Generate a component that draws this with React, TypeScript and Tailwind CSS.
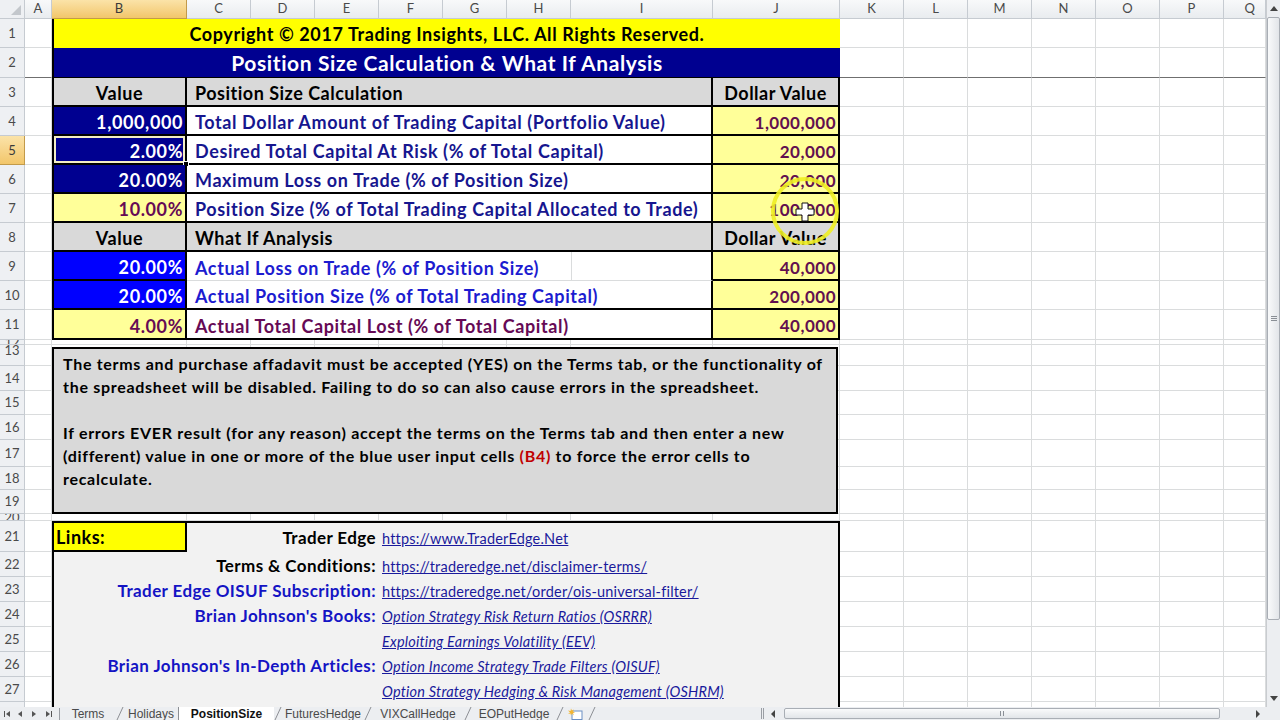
import React from 'react'

const COLS = ['A', 'B', 'C', 'D', 'E', 'F', 'G', 'H', 'I', 'J', 'K', 'L', 'M', 'N', 'O', 'P', 'Q']
const ROWS = Array.from({ length: 28 }, (_, i) => i + 1)

type CalcRow = {
  pos: string
  value: string
  valueCls: string
  label: string
  labelCls: string
  labelBorder: string
  dollar: string
  selected?: boolean
}

const calcRows: CalcRow[] = [
  {
    pos: 'row-start-5',
    value: '1,000,000',
    valueCls: 'bg-[#000090] text-white',
    label: 'Total Dollar Amount of Trading Capital (Portfolio Value)',
    labelCls: 'text-[#16168f]',
    labelBorder: 'border-b-2 border-b-black',
    dollar: '1,000,000',
  },
  {
    pos: 'row-start-6',
    value: '2.00%',
    valueCls: 'bg-[#000090] text-white',
    label: 'Desired Total Capital At Risk (% of Total Capital)',
    labelCls: 'text-[#16168f]',
    labelBorder: 'border-b-2 border-b-black',
    dollar: '20,000',
    selected: true,
  },
  {
    pos: 'row-start-7',
    value: '20.00%',
    valueCls: 'bg-[#000090] text-white',
    label: 'Maximum Loss on Trade (% of Position Size)',
    labelCls: 'text-[#16168f]',
    labelBorder: 'border-b-2 border-b-black',
    dollar: '20,000',
  },
  {
    pos: 'row-start-8',
    value: '10.00%',
    valueCls: 'bg-[#ffff99] text-[#660a55]',
    label: 'Position Size (% of Total Trading Capital Allocated to Trade)',
    labelCls: 'text-[#16168f]',
    labelBorder: 'border-b-2 border-b-black',
    dollar: '100,000',
  },
]

const whatIfRows: CalcRow[] = [
  {
    pos: 'row-start-10',
    value: '20.00%',
    valueCls: 'bg-[#0000ff] text-white',
    label: 'Actual Loss on Trade (% of Position Size)',
    labelCls: 'text-[#1c1cd0]',
    labelBorder: 'border-b border-b-[#dadcdd]',
    dollar: '40,000',
  },
  {
    pos: 'row-start-11',
    value: '20.00%',
    valueCls: 'bg-[#0000ff] text-white',
    label: 'Actual Position Size (% of Total Trading Capital)',
    labelCls: 'text-[#1c1cd0]',
    labelBorder: 'border-b-2 border-b-black',
    dollar: '200,000',
  },
  {
    pos: 'row-start-12',
    value: '4.00%',
    valueCls: 'bg-[#ffff99] text-[#660a55]',
    label: 'Actual Total Capital Lost (% of Total Capital)',
    labelCls: 'text-[#660a55]',
    labelBorder: 'border-b-2 border-b-black',
    dollar: '40,000',
  },
]

const links = [
  { pos: 'row-start-22', label: 'Trader Edge', labelCls: 'text-black', href: 'https://www.TraderEdge.Net', italic: false },
  { pos: 'row-start-23', label: 'Terms & Conditions:', labelCls: 'text-black', href: 'https://traderedge.net/disclaimer-terms/', italic: false },
  { pos: 'row-start-24', label: 'Trader Edge OISUF Subscription:', labelCls: 'text-[#1414c4]', href: 'https://traderedge.net/order/ois-universal-filter/', italic: false },
  { pos: 'row-start-25', label: "Brian Johnson's Books:", labelCls: 'text-[#1414c4]', href: 'Option Strategy Risk Return Ratios (OSRRR)', italic: true },
  { pos: 'row-start-26', label: '', labelCls: '', href: 'Exploiting Earnings Volatility (EEV)', italic: true },
  { pos: 'row-start-27', label: "Brian Johnson's In-Depth Articles:", labelCls: 'text-[#1414c4]', href: 'Option Income Strategy Trade Filters (OISUF)', italic: true },
  { pos: 'row-start-28', label: '', labelCls: '', href: 'Option Strategy Hedging & Risk Management (OSHRM)', italic: true },
]

function DataRow({ row }: { row: CalcRow }) {
  return (
    <>
      <div
        className={`relative col-start-3 col-end-4 flex items-center justify-end border-x-2 border-b-2 border-black pr-[2px] pt-[4px] text-[18px] font-bold tracking-[0.6px] ${row.pos} ${row.valueCls}`}
      >
        {row.value}
        {row.selected && (
          <>
            <div className="absolute inset-0 border-2 border-[#f3eec6]" />
            <div className="absolute -bottom-[4px] -right-[4px] h-[6px] w-[6px] border border-white bg-black" />
          </>
        )}
      </div>
      <div
        className={`col-start-4 col-end-11 flex items-center whitespace-nowrap border-r-2 border-r-black bg-white pl-[8px] pt-[4px] text-[18px] font-bold tracking-[0.6px] ${row.pos} ${row.labelCls} ${row.labelBorder}`}
      >
        {row.label}
      </div>
      <div
        className={`col-start-11 col-end-12 flex items-center justify-end border-r-2 border-b-2 border-black bg-[#ffff99] pr-[2px] pt-[4px] text-[17px] font-bold tracking-[0.5px] text-[#620f4f] ${row.pos}`}
      >
        {row.dollar}
      </div>
    </>
  )
}

function HeaderRow({ pos, title }: { pos: string; title: string }) {
  return (
    <>
      <div className={`col-start-3 col-end-4 flex items-center justify-center border-x-2 border-b-2 border-black bg-[#d9d9d9] pt-[4px] text-[18px] font-bold tracking-[0.6px] text-black ${pos}`}>
        Value
      </div>
      <div className={`col-start-4 col-end-11 flex items-center border-r-2 border-b-2 border-black bg-[#d9d9d9] pl-[8px] pt-[4px] text-[18px] font-bold tracking-[0.5px] text-black ${pos}`}>
        {title}
      </div>
      <div className={`col-start-11 col-end-12 flex items-center justify-center border-r-2 border-b-2 border-black bg-[#d9d9d9] pt-[4px] text-[18px] font-bold tracking-[0.5px] text-black ${pos}`}>
        Dollar Value
      </div>
    </>
  )
}

function Slash() {
  return (
    <svg width="8" height="13" viewBox="0 0 8 13" className="shrink-0">
      <line x1="1" y1="13" x2="7" y2="0" stroke="#8c8f94" strokeWidth="1" />
    </svg>
  )
}

function TabBar() {
  return (
    <div className="flex h-[13px] w-[1280px] items-stretch overflow-hidden bg-[#eceef1] font-['Liberation_Sans',sans-serif] text-[12px] leading-[15px] text-[#4a4a4a]">
      <svg width="60" height="13" viewBox="0 0 60 13" className="shrink-0">
        <rect x="4" y="4" width="1" height="6" fill="#555" />
        <path d="M10 4 L6 7 L10 10 Z" fill="#555" />
        <path d="M22 4 L18 7 L22 10 Z" fill="#555" />
        <path d="M32 4 L36 7 L32 10 Z" fill="#555" />
        <path d="M46 4 L50 7 L46 10 Z" fill="#555" />
        <rect x="51" y="4" width="1" height="6" fill="#555" />
        <rect x="59" y="1" width="1" height="12" fill="#9a9ea4" />
      </svg>
      <div className="w-[56px] shrink-0 text-center">Terms</div>
      <Slash />
      <div className="w-[54px] shrink-0 text-center">Holidays</div>
      <div className="w-[96px] shrink-0 border-l border-[#8c8f94] bg-white text-center font-bold text-[#111]">PositionSize</div>
      <Slash />
      <div className="w-[82px] shrink-0 text-center">FuturesHedge</div>
      <Slash />
      <div className="w-[92px] shrink-0 text-center">VIXCallHedge</div>
      <Slash />
      <div className="w-[84px] shrink-0 text-center">EOPutHedge</div>
      <Slash />
      <div className="flex w-[24px] shrink-0 items-center justify-center">
        <svg width="16" height="12" viewBox="0 0 16 12">
          <rect x="4" y="3" width="10" height="8.5" fill="#fff" stroke="#6b8fc4" strokeWidth="1" />
          <path d="M3 0.5 L4 2.5 L6 1.5 L5 3.5 L7 4.5 L5 5 L6 7.5 L4 5.5 L3 7.5 L2.5 5.5 L0 6 L2 4.5 L0 2.5 L2.5 3 Z" fill="#f2b533" />
        </svg>
      </div>
      <Slash />
      <div className="flex-1" />
      <div className="flex w-[8px] shrink-0 items-center justify-center">
        <div className="h-[11px] w-[3px] border-x border-[#9a9ea4]" />
      </div>
      <div className="flex w-[14px] shrink-0 items-center justify-center">
        <svg width="6" height="8" viewBox="0 0 6 8">
          <path d="M5 0 L1 4 L5 8 Z" fill="#444" />
        </svg>
      </div>
      <div className="flex w-[470px] shrink-0 items-center pl-[4px] pr-[30px]">
        <div className="flex h-[11px] flex-1 items-center justify-center rounded-[2px] border border-[#a9aeb5] bg-gradient-to-b from-[#f9fafb] to-[#e2e5e9]">
          <div className="h-[5px] w-[4px] border-x border-[#8a8f96]" />
        </div>
      </div>
      <div className="flex w-[16px] shrink-0 items-center justify-center">
        <svg width="6" height="8" viewBox="0 0 6 8">
          <path d="M1 0 L5 4 L1 8 Z" fill="#444" />
        </svg>
      </div>
      <div className="w-[14px] shrink-0 bg-[#eceef1]" />
    </div>
  )
}

function VScroll() {
  return (
    <div className="flex h-[707px] w-[14px] shrink-0 flex-col border-l border-[#c9ccd0] bg-[#eceef1]">
      <div className="flex h-[17px] items-center justify-center">
        <svg width="8" height="5" viewBox="0 0 8 5">
          <path d="M0 5 L4 0 L8 5 Z" fill="#444" />
        </svg>
      </div>
      <div className="flex h-[603px] items-center justify-center rounded-[2px] border border-[#a9aeb5] bg-gradient-to-r from-[#f9fafb] to-[#e2e5e9]">
        <div className="flex flex-col gap-[1px]">
          <div className="h-px w-[6px] bg-[#8a8f96]" />
          <div className="h-px w-[6px] bg-[#8a8f96]" />
          <div className="h-px w-[6px] bg-[#8a8f96]" />
        </div>
      </div>
      <div className="flex-1" />
      <div className="flex h-[17px] items-center justify-center">
        <svg width="8" height="5" viewBox="0 0 8 5">
          <path d="M0 0 L4 5 L8 0 Z" fill="#444" />
        </svg>
      </div>
    </div>
  )
}

export default function App() {
  return (
    <div className="flex h-[720px] w-[1280px] flex-col overflow-hidden bg-white font-['Lato','Open_Sans',sans-serif]">
      <div className="flex h-[707px] overflow-hidden">
        <div className="relative grid h-[707px] w-[1266px] shrink-0 grid-cols-[25px_27px_135px_64px_64px_64px_64px_64px_64px_142px_127px_64px_64px_64px_64px_64px_64px_42px] grid-rows-[19px_29px_30px_29px_29px_29px_29px_29px_29px_29px_29px_30px_5px_21px_25px_24px_25px_27px_23px_24px_7px_31px_25px_25px_25px_25px_25px_25px_25px] overflow-hidden">
          {/* Coin haut-gauche */}
          <div className="col-start-1 row-start-1 flex items-end justify-end border-r border-b border-[#c6cbd1] bg-[#eef0f3] p-[3px]">
            <svg width="10" height="10" viewBox="0 0 10 10">
              <path d="M10 0 L10 10 L0 10 Z" fill="#c3c7cc" />
            </svg>
          </div>

          {/* En-têtes de colonnes */}
          {COLS.map((c, i) => (
            <div
              key={c}
              style={{ gridColumn: i + 2, gridRow: 1 }}
              className={
                c === 'B'
                  ? 'flex items-center justify-center border-r border-b border-[#c29a4a] bg-gradient-to-b from-[#fbe3a8] to-[#f2c66a] text-[13px] text-[#3a3a3a]'
                  : 'flex items-center justify-center border-r border-b border-[#c6cbd1] bg-gradient-to-b from-[#f8f9fa] to-[#e9ecef] text-[13px] text-[#4a4a4a]'
              }
            >
              {c === 'Q' ? <span className="w-full pr-[10px] text-right">Q</span> : c}
            </div>
          ))}

          {/* En-têtes de lignes */}
          {ROWS.map((n) => (
            <div
              key={n}
              style={{ gridColumn: 1, gridRow: n + 1 }}
              className={
                n === 5
                  ? 'flex items-center justify-center overflow-hidden border-r border-b border-[#c29a4a] bg-gradient-to-b from-[#fbe3a8] to-[#f2c66a] text-[13px] leading-none text-[#3a3a3a]'
                  : n === 13
                    ? 'flex items-start justify-center overflow-hidden border-r border-b border-[#c6cbd1] bg-[#eef0f3] text-[13px] leading-[10px] text-[#4a4a4a]'
                    : 'flex items-center justify-center overflow-hidden border-r border-b border-[#c6cbd1] bg-[#eef0f3] text-[13px] leading-none text-[#4a4a4a]'
              }
            >
              {n}
            </div>
          ))}

          {/* Quadrillage */}
          {ROWS.map((n) =>
            COLS.map((c, i) => (
              <div
                key={`${c}${n}`}
                style={{ gridColumn: i + 2, gridRow: n + 1 }}
                className={n === 2 ? 'border-r border-b border-r-[#dadcdd] border-b-[#6f6f6f]' : 'border-r border-b border-[#dadcdd]'}
              />
            ))
          )}

          {/* Lignes 1-2 : titres */}
          <div className="col-start-3 col-end-12 row-start-2 flex items-center justify-center border-l-2 border-black bg-[#ffff00] pt-[2px] text-[18px] font-bold tracking-[0.6px] text-black">
            Copyright © 2017 Trading Insights, LLC. All Rights Reserved.
          </div>
          <div className="col-start-3 col-end-12 row-start-3 flex items-center justify-center border-l-2 border-b border-black bg-[#000090] pt-[1px] text-[21px] font-bold tracking-[0.6px] text-white">
            Position Size Calculation &amp; What If Analysis
          </div>

          {/* Calcul */}
          <HeaderRow pos="row-start-4" title="Position Size Calculation" />
          {calcRows.map((row) => (
            <DataRow key={row.pos} row={row} />
          ))}

          {/* What If */}
          <HeaderRow pos="row-start-9" title="What If Analysis" />
          {whatIfRows.map((row) => (
            <DataRow key={row.pos} row={row} />
          ))}
          <div className="col-start-10 col-end-11 row-start-10 mb-px border-l border-[#dadcdd]" />

          {/* Avertissement */}
          <div className="col-start-3 col-end-12 row-start-14 row-end-21 mt-[2px] mr-[2px] border-2 border-black bg-[#d9d9d9] pl-[9px] pt-[3px] text-[16px] font-bold leading-[23px] tracking-[0.7px] text-black whitespace-nowrap">
            The terms and purchase affadavit must be accepted (YES) on the Terms tab, or the functionality of
            <br />
            the spreadsheet will be disabled. Failing to do so can also cause errors in the spreadsheet.
            <br />
            <br />
            If errors EVER result (for any reason) accept the terms on the Terms tab and then enter a new
            <br />
            (different) value in one or more of the blue user input cells <span className="text-[#c00000]">(B4)</span> to force the error cells to
            <br />
            recalculate.
          </div>

          {/* Liens */}
          <div className="col-start-3 col-end-12 row-start-22 row-end-30 border-x-2 border-t-2 border-black bg-[#f2f2f2]" />
          <div className="col-start-3 col-end-4 row-start-22 flex items-center border-2 border-black bg-[#ffff00] pl-[2px] pt-[1px] text-[18px] font-bold tracking-[0.5px] text-black">
            Links:
          </div>
          {links.map((l) => (
            <React.Fragment key={l.pos}>
              {l.label && (
                <div className={`col-start-4 col-end-7 flex items-center justify-end whitespace-nowrap pr-[3px] pt-[2px] text-[17px] font-bold tracking-[0.4px] ${l.pos} ${l.labelCls}`}>
                  {l.label}
                </div>
              )}
              <div className={`col-start-7 col-end-12 flex items-center whitespace-nowrap pl-[3px] pt-[4px] text-[14.5px] tracking-[0.2px] text-[#1a1a9c] underline ${l.pos} ${l.italic ? 'italic' : ''}`}>
                {l.href}
              </div>
            </React.Fragment>
          ))}

          {/* Curseur surligné */}
          <svg className="absolute left-[769px] top-[175px]" width="72" height="72" viewBox="0 0 72 72">
            <circle cx="36" cy="36" r="32" fill="none" stroke="#eeee22" strokeOpacity="0.9" strokeWidth="4" />
            <path
              d="M33 28 H39 V34 H45 V40 H39 V46 H33 V40 H27 V34 H33 Z"
              fill="#fff"
              stroke="#111"
              strokeWidth="1"
            />
          </svg>
        </div>
        <VScroll />
      </div>
      <TabBar />
    </div>
  )
}
